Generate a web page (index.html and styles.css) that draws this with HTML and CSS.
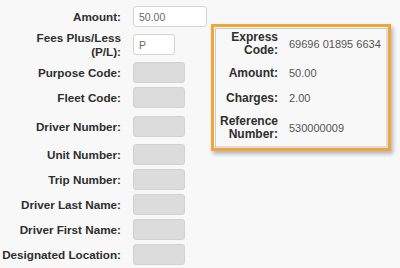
FILE: index.html
```html
<!DOCTYPE html>
<html lang="en">
<head>
  <meta charset="UTF-8" />
  <meta name="viewport" content="width=device-width, initial-scale=1.0" />
  <title>Express Code Request</title>
  <link rel="stylesheet" href="styles.css">
</head>
<body>
  <div class="page">
    <div class="form">
      <div class="form-row wide">
        <label>Amount:</label>
        <input type="text" class="field long" value="50.00" />
      </div>
      <div class="form-row wide">
        <label>Fees Plus/Less<br>(P/L):</label>
        <input type="text" class="field short" value="P" />
      </div>
      <div class="form-row">
        <label>Purpose Code:</label>
        <input type="text" class="field" disabled />
      </div>
      <div class="form-row wider">
        <label>Fleet Code:</label>
        <input type="text" class="field" disabled />
      </div>
      <div class="form-row wide">
        <label>Driver Number:</label>
        <input type="text" class="field" disabled />
      </div>
      <div class="form-row">
        <label>Unit Number:</label>
        <input type="text" class="field" disabled />
      </div>
      <div class="form-row">
        <label>Trip Number:</label>
        <input type="text" class="field" disabled />
      </div>
      <div class="form-row">
        <label>Driver Last Name:</label>
        <input type="text" class="field" disabled />
      </div>
      <div class="form-row">
        <label>Driver First Name:</label>
        <input type="text" class="field" disabled />
      </div>
      <div class="form-row">
        <label>Designated Location:</label>
        <input type="text" class="field" disabled />
      </div>
    </div>

    <div class="summary">
      <div class="summary-label">Express<br>Code:</div>
      <div class="summary-value">69696 01895 6634</div>
      <div class="summary-label">Amount:</div>
      <div class="summary-value">50.00</div>
      <div class="summary-label charges">Charges:</div>
      <div class="summary-value charges">2.00</div>
      <div class="summary-label">Reference<br>Number:</div>
      <div class="summary-value">530000009</div>
    </div>
  </div>
</body>
</html>
```

FILE: styles.css
```css
/* Base */
html, body {
  margin: 0;
  background: #f8f8f8;
  font-family: 'Liberation Sans', Arial, sans-serif;
  color: #333;
}

.page {
  display: flex;
  align-items: flex-start;
  padding-top: 6px;
}

/* Left form */
.form {
  width: 207px;
}
.form-row {
  display: flex;
  align-items: center;
  height: 21px;
  margin-bottom: 4px;
}
.form-row.wide { margin-bottom: 7px; }
.form-row.wider { margin-bottom: 8px; }

.form-row label {
  width: 121px;
  flex: none;
  text-align: right;
  white-space: nowrap;
  font-size: 11.7px;
  font-weight: bold;
  line-height: 14px;
  color: #2e2e2e;
  margin-right: 12px;
}

.field {
  box-sizing: border-box;
  width: 52px;
  height: 21px;
  padding: 0 5px;
  margin: 0;
  border: 1px solid #d4d4d4;
  border-radius: 3px;
  background: #fff;
  font-family: 'Liberation Sans', Arial, sans-serif;
  font-size: 10.5px;
  color: #6a6a6a;
  outline: none;
}
.field.long { width: 74px; }
.field.short { width: 42px; }
.field:disabled {
  background: #dcdcdc;
  border-color: #d2d2d2;
}

/* Result box */
.summary {
  box-sizing: border-box;
  width: 180px;
  height: 127px;
  margin-top: 18px;
  margin-left: 4px;
  padding: 4px 6px 0 0;
  border: 3px solid #f4a435;
  background: #f8f8f8;
  box-shadow: inset 1px 1px 0 #fff, inset 2px 2px 0 #c9c9c9, inset -2px -2px 0 #dcdcdc, 2px 3px 4px rgba(90, 100, 120, 0.45);
  display: grid;
  grid-template-columns: 64px 1fr;
  column-gap: 11px;
  row-gap: 10px;
  align-items: center;
  align-content: start;
}
.summary-label {
  text-align: right;
  font-size: 12px;
  font-weight: bold;
  line-height: 13px;
  color: #2e2e2e;
}
.summary-value {
  font-size: 11px;
  line-height: 13px;
  color: #555;
}
.charges { margin-top: 2px; }
```
